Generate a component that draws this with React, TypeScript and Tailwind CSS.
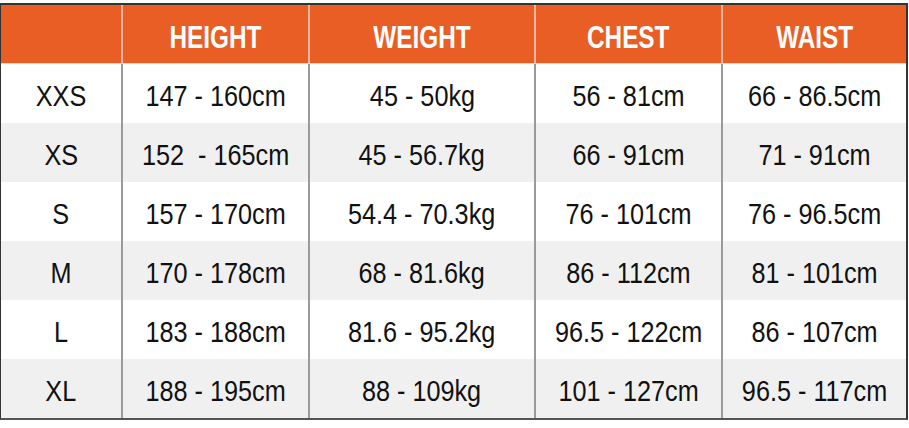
const headers = ["", "HEIGHT", "WEIGHT", "CHEST", "WAIST"];

const rows = [
  ["XXS", "147 - 160cm", "45 - 50kg", "56 - 81cm", "66 - 86.5cm"],
  ["XS", "152  - 165cm", "45 - 56.7kg", "66 - 91cm", "71 - 91cm"],
  ["S", "157 - 170cm", "54.4 - 70.3kg", "76 - 101cm", "76 - 96.5cm"],
  ["M", "170 - 178cm", "68 - 81.6kg", "86 - 112cm", "81 - 101cm"],
  ["L", "183 - 188cm", "81.6 - 95.2kg", "96.5 - 122cm", "86 - 107cm"],
  ["XL", "188 - 195cm", "88 - 109kg", "101 - 127cm", "96.5 - 117cm"],
];

const cols = "grid grid-cols-[120px_187px_226px_187px_185px]";

export default function App() {
  return (
    <div className="h-[428px] w-[909px] bg-white pt-[3px] font-['Liberation_Sans','Arial',sans-serif]">
      <div className="w-[908px] border-l border-r-2 border-t-2 border-b-2 border-l-[#333] border-r-[#333] border-t-[#333] border-b-[#555]">
        <div className={`${cols} h-[58px] bg-[#e95e24]`}>
          {headers.map((h, i) => (
            <div
              key={i}
              className={`flex items-center justify-center pt-[6px] text-[32px] font-bold text-white ${i > 0 ? "border-l-2 border-[#f3b79c]" : ""}`}
            >
              <span className="inline-block scale-x-[0.76] leading-none">{h}</span>
            </div>
          ))}
        </div>
        <div className="h-px bg-[#f6d3c3]" />
        {rows.map((r, ri) => (
          <div key={ri} className={`${cols} h-[59px] ${ri % 2 ? "bg-[#f0f0f0]" : "bg-white"}`}>
            {r.map((c, ci) => (
              <div
                key={ci}
                className={`flex items-center justify-center whitespace-pre pt-[5px] text-[29px] text-[#111] ${ci > 0 ? "border-l-2 border-[#9a9a9a]" : ""}`}
              >
                <span className="inline-block scale-x-[0.87] leading-none">{c}</span>
              </div>
            ))}
          </div>
        ))}
      </div>
    </div>
  );
}
